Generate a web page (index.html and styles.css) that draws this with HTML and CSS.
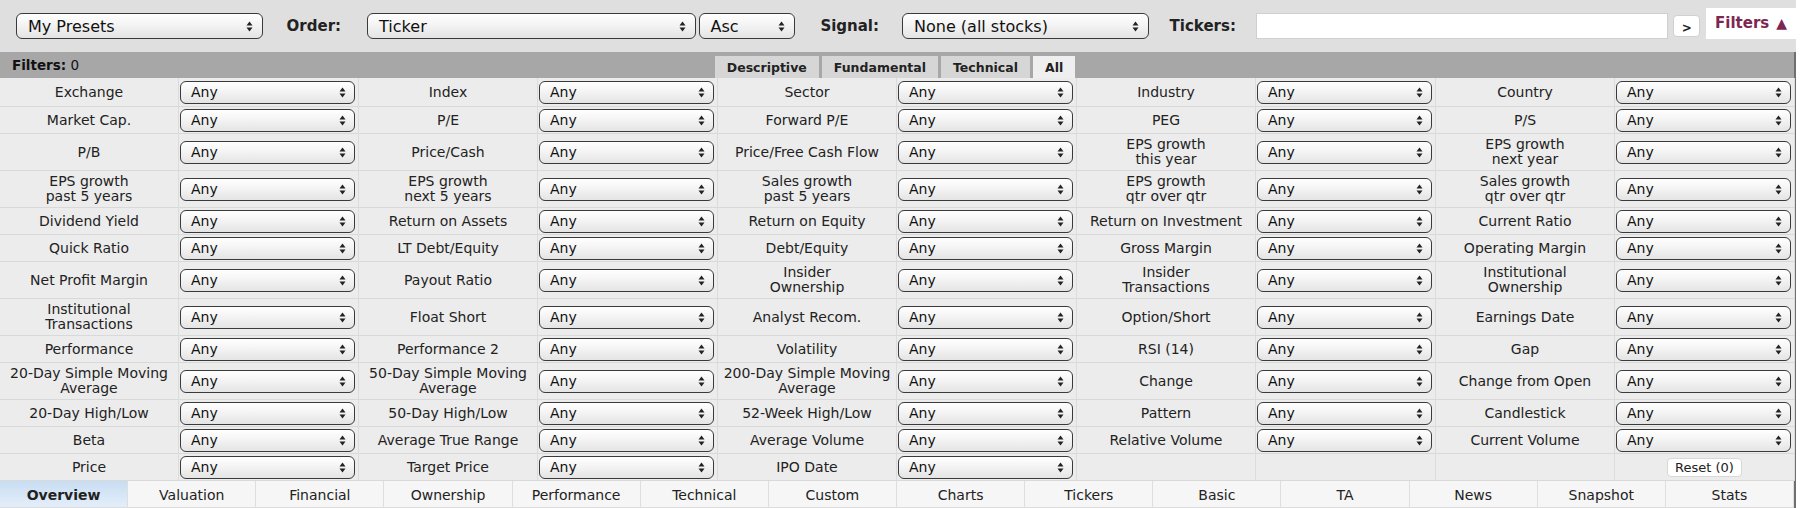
FILE: index.html
```html
<!DOCTYPE html>
<html>
<head>
<meta charset="utf-8">
<link rel="stylesheet" href="styles.css">
</head>
<body>
<div class="page">
  <div class="topbar">
    <div class="sel sel-lg w-presets"><span>My Presets</span><svg class="arr" viewBox="0 0 7 11"><polygon points="0.5,4.5 3.5,0.5 6.5,4.5"/><polygon points="0.5,6.5 3.5,10.5 6.5,6.5"/></svg></div>
    <span class="tlabel l-order">Order:</span>
    <div class="sel sel-lg w-order"><span>Ticker</span><svg class="arr" viewBox="0 0 7 11"><polygon points="0.5,4.5 3.5,0.5 6.5,4.5"/><polygon points="0.5,6.5 3.5,10.5 6.5,6.5"/></svg></div>
    <div class="sel sel-lg w-asc"><span>Asc</span><svg class="arr" viewBox="0 0 7 11"><polygon points="0.5,4.5 3.5,0.5 6.5,4.5"/><polygon points="0.5,6.5 3.5,10.5 6.5,6.5"/></svg></div>
    <span class="tlabel l-signal">Signal:</span>
    <div class="sel sel-lg w-signal"><span>None (all stocks)</span><svg class="arr" viewBox="0 0 7 11"><polygon points="0.5,4.5 3.5,0.5 6.5,4.5"/><polygon points="0.5,6.5 3.5,10.5 6.5,6.5"/></svg></div>
    <span class="tlabel l-tickers">Tickers:</span>
    <div class="tickers-input"></div>
    <div class="go-btn">&gt;</div>
    <div class="filters-toggle">Filters <span class="tri">&#9650;</span></div>
  </div>

  <div class="fbar">
    <div class="fcount"><b>Filters:</b> 0</div>
    <div class="ftabs">
      <div class="ftab">Descriptive</div>
      <div class="ftab">Fundamental</div>
      <div class="ftab">Technical</div>
      <div class="ftab active">All</div>
    </div>
    <div class="fspacer"></div>
  </div>

  <div class="grid" id="grid"></div>

  <div class="views">
    <div class="view active">Overview</div>
    <div class="view">Valuation</div>
    <div class="view">Financial</div>
    <div class="view">Ownership</div>
    <div class="view">Performance</div>
    <div class="view">Technical</div>
    <div class="view">Custom</div>
    <div class="view">Charts</div>
    <div class="view">Tickers</div>
    <div class="view">Basic</div>
    <div class="view">TA</div>
    <div class="view">News</div>
    <div class="view">Snapshot</div>
    <div class="view">Stats</div>
  </div>
</div>
<script src="app.js"></script>
</body>
</html>
```

FILE: app.js
```js
var rows = [
  ["Exchange","Index","Sector","Industry","Country"],
  ["Market Cap.","P/E","Forward P/E","PEG","P/S"],
  ["P/B","Price/Cash","Price/Free Cash Flow","EPS growth<br>this year","EPS growth<br>next year"],
  ["EPS growth<br>past 5 years","EPS growth<br>next 5 years","Sales growth<br>past 5 years","EPS growth<br>qtr over qtr","Sales growth<br>qtr over qtr"],
  ["Dividend Yield","Return on Assets","Return on Equity","Return on Investment","Current Ratio"],
  ["Quick Ratio","LT Debt/Equity","Debt/Equity","Gross Margin","Operating Margin"],
  ["Net Profit Margin","Payout Ratio","Insider<br>Ownership","Insider<br>Transactions","Institutional<br>Ownership"],
  ["Institutional<br>Transactions","Float Short","Analyst Recom.","Option/Short","Earnings Date"],
  ["Performance","Performance 2","Volatility","RSI (14)","Gap"],
  ["20-Day Simple Moving<br>Average","50-Day Simple Moving<br>Average","200-Day Simple Moving<br>Average","Change","Change from Open"],
  ["20-Day High/Low","50-Day High/Low","52-Week High/Low","Pattern","Candlestick"],
  ["Beta","Average True Range","Average Volume","Relative Volume","Current Volume"],
  ["Price","Target Price","IPO Date","",""]
];
var arrow = '<svg class="arr" viewBox="0 0 7 11"><polygon points="0.5,4.5 3.5,0.5 6.5,4.5"/><polygon points="0.5,6.5 3.5,10.5 6.5,6.5"/></svg>';
var html = "";
rows.forEach(function (r, ri) {
  var rowCls = ri === 0 ? " first" : "";
  r.forEach(function (label, ci) {
    html += '<div class="c lab' + rowCls + '">' + label + '</div>';
    if (label) {
      html += '<div class="c inp' + rowCls + '"><div class="sel sel-sm"><span>Any</span>' + arrow + '</div></div>';
    } else if (ri === rows.length - 1 && ci === 4) {
      html += '<div class="c inp reset-cell"><div class="reset">Reset (0)</div></div>';
    } else {
      html += '<div class="c inp"></div>';
    }
  });
});
document.getElementById("grid").innerHTML = html;
```

FILE: styles.css
```css
* { box-sizing: border-box; }
html, body { margin: 0; padding: 0; background: #ffffff; }
body { font-family: "DejaVu Sans", Verdana, sans-serif; color: #222; }

.page { width: 1796px; }

/* ---------- top bar ---------- */
.topbar {
  height: 52px;
  background: #dfdfdf;
  display: flex;
  align-items: center;
  padding-left: 16px;
}
.tlabel { font-weight: bold; font-size: 15px; color: #222; }
.l-order { margin-left: 24px; }
.l-signal { margin-left: 25px; }
.l-tickers { margin-left: 21px; }

.sel {
  display: flex;
  align-items: center;
  justify-content: space-between;
  border: 1px solid #3a3a3a;
  border-radius: 6px;
  background: linear-gradient(#ffffff, #f4f4f4 45%, #e4e4e4);
  color: #111;
}
.sel .arr { width: 7px; height: 11px; fill: #222; flex: none; }
.sel-lg { height: 26px; font-size: 16px; padding: 0 9px 0 11px; }
.w-presets { width: 247px; }
.w-order { width: 329px; margin-left: 26px; }
.w-asc { width: 97px; margin-left: 3px; }
.w-signal { width: 247px; margin-left: 23px; }

.tickers-input {
  width: 413px;
  height: 26px;
  margin-left: 20px;
  background: #fff;
  border: 1px solid #cfcfcf;
}
.go-btn {
  width: 27px;
  height: 22px;
  margin-left: 5px;
  background: #fff;
  border: 1px solid #d0d0d0;
  border-radius: 4px;
  font-size: 12px;
  font-weight: bold;
  display: flex;
  align-items: center;
  justify-content: center;
  padding-top: 3px;
}
.filters-toggle {
  width: 90px;
  height: 31px;
  margin-left: 6px;
  align-self: flex-start;
  margin-top: 8px;
  background: #fff;
  color: #7d2652;
  font-weight: bold;
  font-size: 15px;
  display: flex;
  align-items: center;
  justify-content: center;
  gap: 7px;
  padding-bottom: 1px;
}
.filters-toggle .tri { font-size: 14px; font-weight: normal; }

/* ---------- filters bar ---------- */
.fbar {
  height: 26px;
  background: #a7a7a7;
  display: grid;
  grid-template-columns: 1fr auto 1fr;
  align-items: end;
  border-right: 2px solid #6f6f6f;
}
.fcount { font-size: 13.5px; padding: 0 0 5px 12px; color: #111; }
.ftabs { display: flex; gap: 3px; margin-right: 4px; }
.ftab {
  height: 22px;
  padding: 0 12px;
  background: #d6d6d6;
  font-weight: bold;
  font-size: 12.5px;
  color: #222;
  display: flex;
  align-items: center;
}
.ftab.active { background: #efefef; }

/* ---------- filter grid ---------- */
.grid {
  display: grid;
  grid-template-columns: repeat(5, 179px 180px);
  background: #ececec;
  border-right: 2px solid #6f6f6f;
}
.c {
  min-height: 27px;
  border-bottom: 1px solid #d9d9d9;
  border-right: 1px solid #dcdcdc;
  display: flex;
  align-items: center;
}
.c.first { min-height: 29px; }
.lab {
  justify-content: center;
  text-align: center;
  font-size: 14px;
  line-height: 15px;
  padding: 3px 2px 3px;
  color: #222;
}
.inp { padding-left: 1px; }
.sel-sm {
  width: 175px;
  height: 23px;
  font-size: 14px;
  padding: 0 8px 0 10px;
}
.reset-cell { justify-content: center; padding-left: 0; }
.reset {
  background: #fff;
  border: 1px solid #d8d8d8;
  border-radius: 4px;
  font-size: 13px;
  padding: 1px 7px;
  color: #222;
}

/* ---------- view tabs ---------- */
.views {
  display: grid;
  grid-template-columns: repeat(14, 1fr);
  height: 27px;
  background: #f6f6f6;
  border-right: 2px solid #6f6f6f;
}
.view {
  display: flex;
  align-items: center;
  justify-content: center;
  font-size: 14px;
  color: #222;
  border-right: 1px solid #dedede;
  border-bottom: 1px solid #dcdcdc;
  padding-top: 2px;
}
.view.active {
  font-weight: bold;
  background: linear-gradient(#c8ddf2, #e4eefa);
}
```
